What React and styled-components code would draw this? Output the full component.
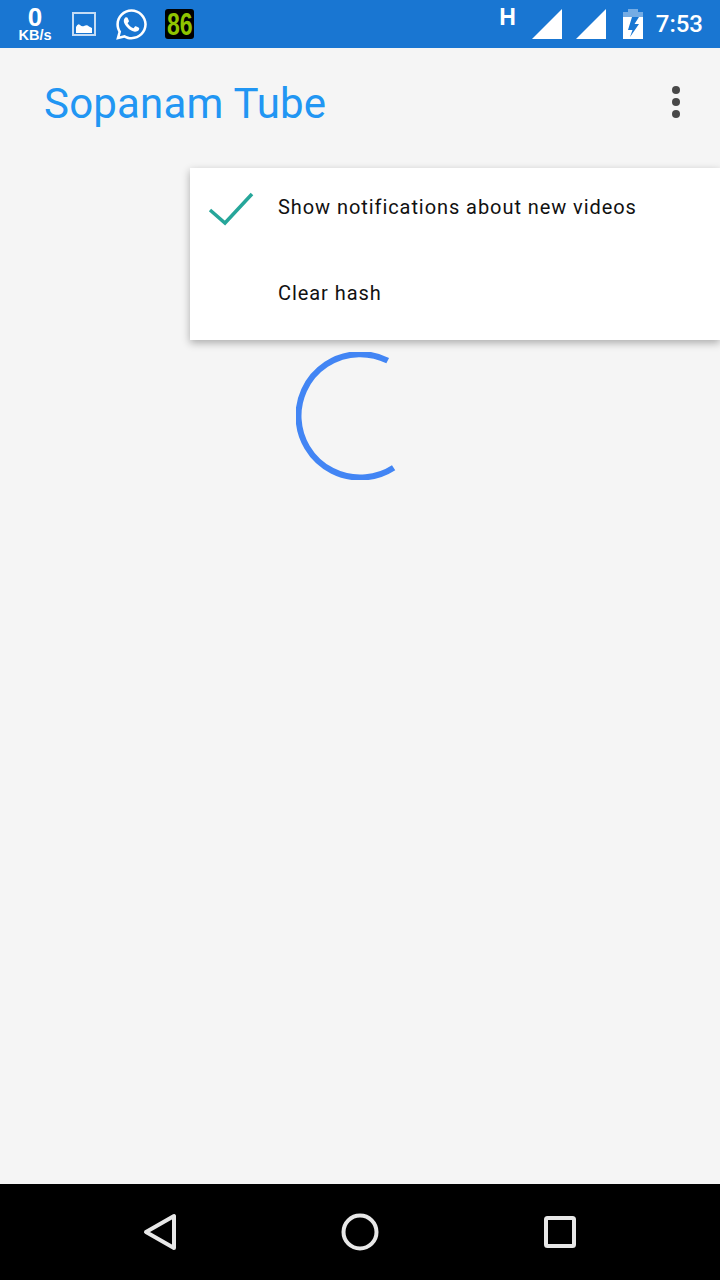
import React from 'react'
import styled, { createGlobalStyle } from 'styled-components'
import { FaWhatsapp } from 'react-icons/fa'

const GlobalStyle = createGlobalStyle`
html, body {
  margin: 0;
  padding: 0;
  background: #f5f5f5;
}
body {
  font-family: Roboto, "Liberation Sans", sans-serif;
}
`

const Screen = styled.div`
position: relative;
width: 720px;
height: 1280px;
display: flex;
flex-direction: column;
background: #f5f5f5;
overflow: hidden;
`

const StatusBar = styled.div`
height: 48px;
flex-shrink: 0;
display: flex;
align-items: center;
justify-content: space-between;
background: #1976d2;
color: #fff;
`
const StatusGroup = styled.div`
display: flex;
align-items: center;
height: 100%;
`
const NetSpeed = styled.div`
width: 36px;
margin-left: 17px;
display: flex;
flex-direction: column;
align-items: center;
gap: 2px;
font-family: "Liberation Sans", sans-serif;
font-weight: 700;
`
const SpeedValue = styled.span`
font-size: 26px;
line-height: 20px;
`
const SpeedUnit = styled.span`
font-size: 14.5px;
line-height: 12px;
`
const StatusIcon = styled.svg`
display: block;
flex-shrink: 0;
margin-left: ${p => p.$left}px;
`
const WhatsappIcon = styled(FaWhatsapp)`
display: block;
margin-left: 18px;
font-size: 35px;
`
const TempBadge = styled.div`
width: 29px;
height: 30px;
margin-left: 16px;
display: flex;
align-items: center;
justify-content: center;
border-radius: 3px;
background: #000;
color: #8fc400;
font-family: "Liberation Sans", sans-serif;
font-size: 32px;
font-weight: 700;
line-height: 30px;
`
const TempDigits = styled.span`
display: inline-block;
transform: scaleX(0.72);
`
const NetType = styled.span`
font-family: "Liberation Sans", sans-serif;
font-weight: 700;
font-size: 23px;
line-height: 1;
margin-bottom: 13px;
`
const Clock = styled.span`
margin-left: 13px;
margin-right: 17px;
font-size: 24px;
font-weight: 500;
`

const AppBar = styled.header`
height: 112px;
flex-shrink: 0;
display: flex;
align-items: center;
justify-content: space-between;
padding: 0 40px 0 44px;
`
const Title = styled.h1`
margin: -2px 0 0;
color: #2196f3;
font-size: 42px;
font-weight: 400;
letter-spacing: 0.2px;
`
const MoreButton = styled.div`
display: flex;
flex-direction: column;
gap: 4px;
margin-top: -4px;
`
const Dot = styled.span`
width: 8px;
height: 8px;
border-radius: 50%;
background: #484848;
`

const Main = styled.main`
flex: 1;
display: flex;
justify-content: center;
padding-top: 192px;
`
const Spinner = styled.svg`
display: block;
`

const Menu = styled.div`
position: absolute;
top: 168px;
left: 190px;
right: 0;
background: #fff;
box-shadow: 0 3px 8px rgba(0, 0, 0, 0.3);
`
const MenuItem = styled.div`
height: 86px;
box-sizing: border-box;
display: flex;
align-items: center;
padding: 0 0 8px 88px;
position: relative;
color: #111;
font-size: 20px;
letter-spacing: 0.93px;
`
const Check = styled.svg`
position: absolute;
left: 18px;
top: 24px;
`

const NavBar = styled.nav`
height: 96px;
flex-shrink: 0;
display: flex;
justify-content: center;
align-items: center;
background: #000;
`
const NavButton = styled.div`
width: 200px;
display: flex;
justify-content: center;
`

export default function App() {
  return (
    <Screen>
      <GlobalStyle />
      <StatusBar>
        <StatusGroup>
          <NetSpeed>
            <SpeedValue>0</SpeedValue>
            <SpeedUnit>KB/s</SpeedUnit>
          </NetSpeed>
          <StatusIcon $left={19} width="24" height="24" viewBox="0 0 24 24">
            <rect x="1" y="1" width="22" height="22" fill="none" stroke="#fff" strokeOpacity="0.75" strokeWidth="2" />
            <path d="M4 21 V15 Q6 11 8 13 Q10 15 12 14 Q15 12.5 17 14.5 L20 16 V21 Z" fill="#fff" />
          </StatusIcon>
          <WhatsappIcon />
          <TempBadge><TempDigits>86</TempDigits></TempBadge>
        </StatusGroup>
        <StatusGroup>
          <NetType>H</NetType>
          <StatusIcon $left={16} width="30" height="30" viewBox="0 0 30 30">
            <path d="M0 30 L30 0 L30 30 Z" fill="#fff" />
          </StatusIcon>
          <StatusIcon $left={14} width="30" height="30" viewBox="0 0 30 30">
            <path d="M0 30 L30 0 L30 30 Z" fill="#fff" />
          </StatusIcon>
          <StatusIcon $left={17} width="20" height="30" viewBox="0 0 20 30">
            <path d="M5 0 H15 V3 H20 V8 H0 V3 H5 Z" fill="#fff" fillOpacity="0.4" />
            <path fillRule="evenodd" d="M0 8 H20 V30 H0 Z M16 8 H9 L5 21 H9.5 L7 28 L16 15 H11.5 Z" fill="#fff" />
          </StatusIcon>
          <Clock>7:53</Clock>
        </StatusGroup>
      </StatusBar>

      <AppBar>
        <Title>Sopanam Tube</Title>
        <MoreButton>
          <Dot />
          <Dot />
          <Dot />
        </MoreButton>
      </AppBar>

      <Main>
        <Spinner width="128" height="128" viewBox="0 0 128 128">
          <path d="M91.7 8.6 A61.7 61.7 0 1 0 97.6 115.7" fill="none" stroke="#4285f4" strokeWidth="6" />
        </Spinner>
      </Main>

      <Menu>
        <MenuItem>
          <Check width="46" height="36" viewBox="0 0 46 36">
            <path d="M2 18 L17 31 L44 2" fill="none" stroke="#26a69a" strokeWidth="3.5" />
          </Check>
          Show notifications about new videos
        </MenuItem>
        <MenuItem>Clear hash</MenuItem>
      </Menu>

      <NavBar>
        <NavButton>
          <svg width="36" height="40" viewBox="0 0 36 40">
            <path d="M4 20 L32 4 L32 36 Z" fill="none" stroke="#e8e8e8" strokeWidth="4" strokeLinejoin="round" />
          </svg>
        </NavButton>
        <NavButton>
          <svg width="40" height="40" viewBox="0 0 40 40">
            <circle cx="20" cy="20" r="16.5" fill="none" stroke="#e8e8e8" strokeWidth="4" />
          </svg>
        </NavButton>
        <NavButton>
          <svg width="34" height="34" viewBox="0 0 34 34">
            <rect x="3" y="3" width="28" height="28" rx="1.5" fill="none" stroke="#e8e8e8" strokeWidth="4" />
          </svg>
        </NavButton>
      </NavBar>
    </Screen>
  )
}
